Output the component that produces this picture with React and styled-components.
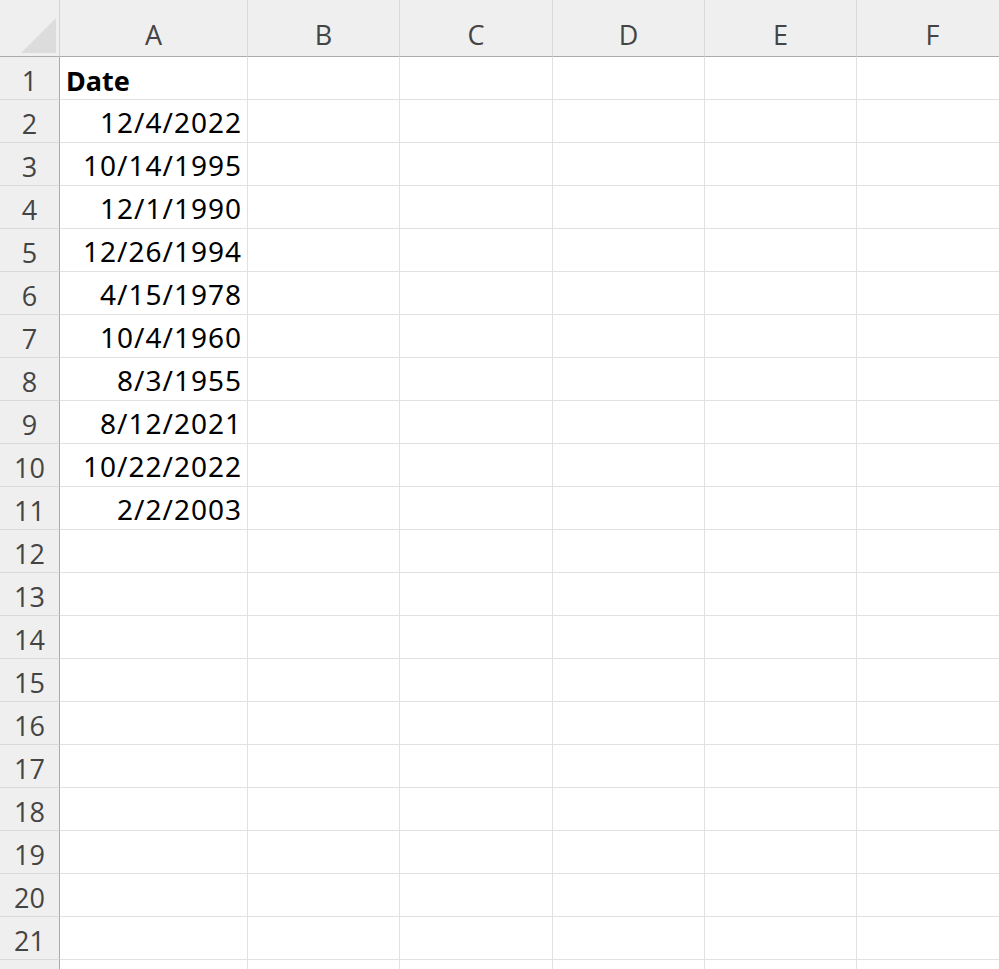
import styled, { createGlobalStyle } from "styled-components";

const dates = [
    "12/4/2022",
    "10/14/1995",
    "12/1/1990",
    "12/26/1994",
    "4/15/1978",
    "10/4/1960",
    "8/3/1955",
    "8/12/2021",
    "10/22/2022",
    "2/2/2003",
];

const columns = ["A", "B", "C", "D", "E", "F"];
const widths = "60px 188px 152px 153px 152px 152px 152px";
const ROWS = 21;

const GlobalStyle = createGlobalStyle`
    html, body {
        margin: 0;
        padding: 0;
        background: #FFFFFF;
        overflow: hidden;
    }
`;

const Sheet = styled.div`
    display: grid;
    grid-template-columns: ${widths};
    grid-template-rows: 57px;
    grid-auto-rows: 43px;
    width: 999px;
    height: 969px;
    overflow: hidden;
`;

const Corner = styled.div`
    position: relative;
    background: #EFEFEF;
    border-right: 1px solid #D4D4D4;
    border-bottom: 1px solid #ABABAB;

    svg {
        position: absolute;
        right: 3px;
        bottom: 3px;
    }
`;

const ColHead = styled.div`
    display: flex;
    justify-content: center;
    align-items: flex-end;
    padding-bottom: 8px;
    background: #EFEFEF;
    border-right: 1px solid #D9D9D9;
    border-bottom: 1px solid #ABABAB;
    font-family: "Open Sans", "Noto Sans", sans-serif;
    font-size: 27px;
    line-height: 1;
    color: #444444;
    box-sizing: border-box;
`;

const RowHead = styled.div`
    display: flex;
    justify-content: center;
    align-items: flex-end;
    padding-bottom: 5px;
    background: #EFEFEF;
    border-right: 1px solid #ABABAB;
    border-bottom: 1px solid #DADADA;
    font-family: "Open Sans", "Noto Sans", sans-serif;
    font-size: 27px;
    line-height: 1;
    color: #444444;
    box-sizing: border-box;
`;

const Cell = styled.div`
    display: flex;
    align-items: flex-end;
    justify-content: ${(p) => (p.$bold ? "flex-start" : "flex-end")};
    padding: ${(p) => (p.$bold ? "0 6px 5px 6px" : "0 5px 6px 6px")};
    border-right: 1px solid #E1E1E1;
    border-bottom: 1px solid #E1E1E1;
    font-family: "Noto Sans", "Open Sans", sans-serif;
    font-size: ${(p) => (p.$bold ? "27px" : "28px")};
    font-weight: ${(p) => (p.$bold ? 700 : 400)};
    letter-spacing: ${(p) => (p.$bold ? "0" : "1px")};
    line-height: 1;
    color: #000000;
    white-space: nowrap;
    box-sizing: border-box;
`;

function cellText(row, col) {
    if (col !== 0) return "";
    if (row === 1) return "Date";
    return dates[row - 2] || "";
}

export default function App() {
    const rows = [];
    // one extra unnumbered row peeks in at the bottom edge
    for (let r = 1; r <= ROWS + 1; r++) {
        rows.push(<RowHead key={`h${r}`}>{r <= ROWS ? r : ""}</RowHead>);
        columns.forEach((c, i) => {
            rows.push(
                <Cell key={`${c}${r}`} $bold={r === 1}>
                    {cellText(r, i)}
                </Cell>
            );
        });
    }

    return (
        <>
            <GlobalStyle />
            <Sheet>
                <Corner>
                    <svg width="35" height="35" viewBox="0 0 35 35">
                        <polygon points="35,0 35,35 0,35" fill="#DCDCDC" />
                    </svg>
                </Corner>
                {columns.map((c) => (
                    <ColHead key={c}>{c}</ColHead>
                ))}
                {rows}
            </Sheet>
        </>
    );
}
